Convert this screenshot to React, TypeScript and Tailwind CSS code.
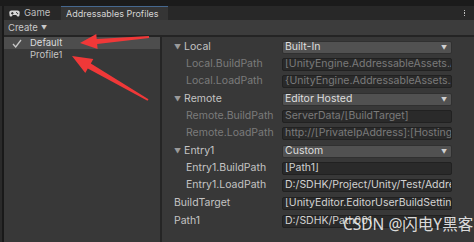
import React from 'react';

type Row = {
  label: string;
  value: string;
  kind: 'dropdown' | 'field';
  indent?: boolean;
  foldout?: boolean;
  disabled?: boolean;
};

const groups: Row[][] = [
  [
    { label: 'Local', value: 'Built-In', kind: 'dropdown', foldout: true },
    { label: 'Local.BuildPath', value: '[UnityEngine.AddressableAssets.Addressables.BuildPath]', kind: 'field', indent: true, disabled: true },
    { label: 'Local.LoadPath', value: '{UnityEngine.AddressableAssets.Addressables.RuntimePath}', kind: 'field', indent: true, disabled: true },
  ],
  [
    { label: 'Remote', value: 'Editor Hosted', kind: 'dropdown', foldout: true },
    { label: 'Remote.BuildPath', value: 'ServerData/[BuildTarget]', kind: 'field', indent: true, disabled: true },
    { label: 'Remote.LoadPath', value: 'http://[PrivateIpAddress]:[HostingServicePort]', kind: 'field', indent: true, disabled: true },
  ],
  [
    { label: 'Entry1', value: 'Custom', kind: 'dropdown', foldout: true },
    { label: 'Entry1.BuildPath', value: '[Path1]', kind: 'field', indent: true },
    { label: 'Entry1.LoadPath', value: 'D:/SDHK/Project/Unity/Test/AddressablesTest', kind: 'field', indent: true },
  ],
  [{ label: 'BuildTarget', value: '[UnityEditor.EditorUserBuildSettings.activeBuildTarget]', kind: 'field' }],
  [{ label: 'Path1', value: 'D:/SDHK/Path001', kind: 'field' }],
];

// red annotation arrow, tail -> tip
function arrowPoints(tx: number, ty: number, hx: number, hy: number, headLen: number, headHalf: number, tailHalf: number, neckHalf: number) {
  const dx = hx - tx;
  const dy = hy - ty;
  const len = Math.hypot(dx, dy);
  const ux = dx / len;
  const uy = dy / len;
  const nx = -uy;
  const ny = ux;
  const bx = hx - ux * headLen;
  const by = hy - uy * headLen;
  const pts = [
    [tx + nx * tailHalf, ty + ny * tailHalf],
    [bx + nx * neckHalf, by + ny * neckHalf],
    [bx + nx * headHalf, by + ny * headHalf],
    [hx, hy],
    [bx - nx * headHalf, by - ny * headHalf],
    [bx - nx * neckHalf, by - ny * neckHalf],
    [tx - nx * tailHalf, ty - ny * tailHalf],
  ];
  return pts.map((p) => p.join(',')).join(' ');
}

function PropRow({ row }: { row: Row }) {
  return (
    <div className="flex h-[13px] items-center">
      <div className={`flex w-[108px] shrink-0 items-center ${row.indent ? 'pl-[12px]' : ''}`}>
        {row.foldout && <span className="mr-[3px] text-[7px] leading-none text-[#9a9a9a]">▼</span>}
        <span className={`whitespace-nowrap text-[10.5px] leading-none ${row.disabled ? 'text-[#7b7b7b]' : 'text-[#c4c4c4]'}`}>
          {row.label}
        </span>
      </div>
      {row.kind === 'dropdown' ? (
        <div className="flex h-[13px] w-[170px] items-center justify-between rounded-[2px] border border-[#303030] bg-[#515151] pl-[2px] pr-[4px]">
          <span className="text-[10.5px] leading-none text-[#dedede]">{row.value}</span>
          <span className="text-[6px] leading-none text-[#d0d0d0]">▼</span>
        </div>
      ) : (
        <div className="flex h-[13px] w-[170px] items-center overflow-hidden rounded-[2px] border border-[#212121] bg-[#2a2a2a] pl-[2px]">
          <span className={`whitespace-nowrap text-[10.5px] leading-none ${row.disabled ? 'text-[#7a7a7a]' : 'text-[#d2d2d2]'}`}>
            {row.value}
          </span>
        </div>
      )}
    </div>
  );
}

export default function App() {
  return (
    <div className="relative flex h-[242px] w-[474px] flex-col overflow-hidden bg-[#383838] font-['Inter',sans-serif]">
      <div className="h-[6px] bg-[#1b1b1b]" />
      <div className="flex flex-1">
        <div className="w-[2px] bg-[#2a2a2a]" />
        <div className="w-[2px] bg-[#191919]" />
        <div className="flex flex-1 flex-col">
          {/* tab bar */}
          <div className="flex h-[14px] items-stretch bg-[#282828]">
            <div className="flex w-[57px] items-center gap-[4px] pl-[5px]">
              <svg width="11" height="7" viewBox="0 0 11 7">
                <path d="M2.5 0.5h6a2.3 2.3 0 0 1 2.2 2.6l-0.3 2.4a1.3 1.3 0 0 1-2.2 0.7L7.2 5H3.8L2.8 6.2a1.3 1.3 0 0 1-2.2-0.7L0.3 3.1A2.3 2.3 0 0 1 2.5 0.5z" fill="#d6d6d6" />
                <rect x="2" y="2.8" width="2.6" height="1" fill="#282828" />
                <rect x="2.8" y="2" width="1" height="2.6" fill="#282828" />
                <circle cx="7.6" cy="2.6" r="0.6" fill="#282828" />
                <circle cx="8.6" cy="3.6" r="0.6" fill="#282828" />
              </svg>
              <span className="text-[9.5px] leading-none text-[#bdbdbd]">Game</span>
            </div>
            <div className="flex w-[107px] items-center border-t border-[#46688f] bg-[#353535] pl-[5px]">
              <span className="whitespace-nowrap text-[9px] leading-none text-[#d4d4d4]">Addressables Profiles</span>
            </div>
            <div className="flex flex-1 items-center justify-end pr-[9px]">
              <div className="flex flex-col gap-[1px]">
                <div className="h-[1.5px] w-[1.5px] bg-[#bcbcbc]" />
                <div className="h-[1.5px] w-[1.5px] bg-[#bcbcbc]" />
                <div className="h-[1.5px] w-[1.5px] bg-[#bcbcbc]" />
              </div>
            </div>
          </div>
          {/* toolbar */}
          <div className="flex h-[15px] items-center bg-[#3c3c3c] pl-[4px]">
            <span className="text-[9.5px] leading-none text-[#c8c8c8]">Create</span>
            <span className="ml-[3px] text-[6px] leading-none text-[#c8c8c8]">▼</span>
          </div>
          <div className="h-[2px] bg-[#242424]" />
          <div className="flex flex-1">
            {/* profile list */}
            <div className="flex w-[156px] flex-col">
              <div className="flex h-[12px] items-center bg-[#4d4d4d]">
                <svg width="10" height="9" viewBox="0 0 10 9" className="ml-[8px]">
                  <path d="M1 5l2.7 3L9 1" stroke="#c8c8c8" strokeWidth="1.3" fill="none" />
                </svg>
                <span className="ml-[8px] text-[9.5px] leading-none text-[#dcdcdc]">Default</span>
              </div>
              <div className="flex h-[12px] items-center">
                <span className="ml-[26px] text-[9.5px] leading-none text-[#c4c4c4]">Profile1</span>
              </div>
            </div>
            <div className="w-[2px] bg-[#252525]" />
            {/* profile values */}
            <div className="flex flex-1 flex-col gap-[5px] pl-[12px] pt-[4px]">
              {groups.map((g, i) => (
                <div key={i} className="flex flex-col gap-[4px]">
                  {g.map((r) => (
                    <PropRow key={r.label} row={r} />
                  ))}
                </div>
              ))}
            </div>
          </div>
        </div>
      </div>

      {/* annotations */}
      <svg className="pointer-events-none absolute left-0 top-0" width="474" height="242">
        <polygon points={arrowPoints(149, 37, 80, 43, 17, 7.5, 1, 2.5)} fill="#f03838" />
        <polygon points={arrowPoints(148, 100, 72, 56, 20, 8, 1, 3)} fill="#f03838" />
      </svg>
      <div className="pointer-events-none absolute left-[343px] top-[217px] whitespace-nowrap font-['Noto_Sans','Noto_Sans_CJK_SC',sans-serif] text-[15.5px] leading-none text-[#f2f2f2]/90">
        CSDN @闪电Y黑客
      </div>
    </div>
  );
}
